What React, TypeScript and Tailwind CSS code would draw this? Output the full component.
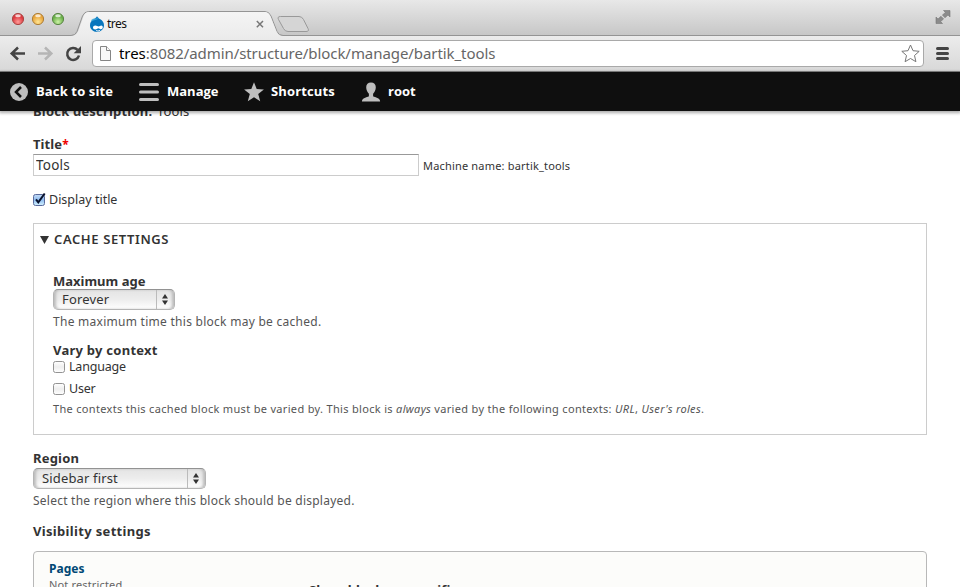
import { useState } from 'react';

interface CheckboxProps {
  label: string;
  defaultChecked?: boolean;
  className?: string;
}

interface SelectProps {
  value: string;
  className?: string;
}

function Checkbox({ label, defaultChecked = false, className = '' }: CheckboxProps) {
  const [checked, setChecked] = useState(defaultChecked);

  return (
    <button
      type="button"
      role="checkbox"
      aria-checked={checked}
      onClick={() => setChecked(!checked)}
      className={`flex h-[18px] items-center gap-1 text-[12.5px] text-[#333] ${className}`}
    >
      <svg width="12" height="14" viewBox="0 0 12 14" className="shrink-0 overflow-visible">
        <defs>
          <linearGradient id="boxOff" x1="0" y1="0" x2="0" y2="1">
            <stop offset="0" stopColor="#fff" />
            <stop offset=".5" stopColor="#eee" />
            <stop offset="1" stopColor="#fff" />
          </linearGradient>
          <linearGradient id="boxOn" x1="0" y1="0" x2="0" y2="1">
            <stop offset="0" stopColor="#c3daf5" />
            <stop offset=".5" stopColor="#8fbdf0" />
            <stop offset="1" stopColor="#d5f3ff" />
          </linearGradient>
        </defs>
        <rect
          x=".5"
          y="1.5"
          width="11"
          height="11"
          rx="2"
          fill={checked ? 'url(#boxOn)' : 'url(#boxOff)'}
          stroke={checked ? '#5a6a9c' : '#939393'}
        />
        {checked && <path d="M3 6.3 5.3 9.3 11.7.5" fill="none" stroke="#08112c" strokeWidth="2" />}
      </svg>
      <span>{label}</span>
    </button>
  );
}

function Select({ value, className = '' }: SelectProps) {
  return (
    <button
      type="button"
      className={`flex h-[21px] items-stretch rounded-[5px] border border-[#b5b5b5] border-t-[#929292] bg-linear-to-b from-[#e4e4e4] via-[#ededed] to-white text-left text-[#333] shadow-[inset_3px_0_3px_-1px_#bbb,inset_-3px_0_3px_-1px_#bbb] ${className}`}
    >
      <span className="flex-1 pl-2 text-[13px] leading-[19px] tracking-[0.15px]">{value}</span>
      <span className="flex w-[18px] items-center justify-center border-l border-[#bbb] pr-[2px]">
        <svg width="6" height="11" viewBox="0 0 6 11" fill="#333">
          <path d="M3 0 6 4.5H0zM3 11 0 6.5h6z" />
        </svg>
      </span>
    </button>
  );
}

function TitleBar() {
  return (
    <div className="flex h-9 bg-linear-to-b from-[#e8e8e8] to-[#c6c6c6]">
      <svg width="960" height="36" viewBox="0 0 960 36">
        <defs>
          <linearGradient id="tab" x1="0" y1="0" x2="0" y2="1">
            <stop offset="0" stopColor="#f4f4f4" />
            <stop offset="1" stopColor="#ececec" />
          </linearGradient>
          <radialGradient id="red" cy=".75">
            <stop offset="0" stopColor="#ff9b98" />
            <stop offset="1" stopColor="#dc3a40" />
          </radialGradient>
          <radialGradient id="amber" cy=".75">
            <stop offset="0" stopColor="#ffe695" />
            <stop offset="1" stopColor="#e9a63c" />
          </radialGradient>
          <radialGradient id="green" cy=".75">
            <stop offset="0" stopColor="#ccf2a6" />
            <stop offset="1" stopColor="#6bb04a" />
          </radialGradient>
        </defs>
        <circle cx="18" cy="19" r="5.6" fill="url(#red)" stroke="#a94744" />
        <circle cx="38" cy="19" r="5.6" fill="url(#amber)" stroke="#ad7e38" />
        <circle cx="58" cy="19" r="5.6" fill="url(#green)" stroke="#5b8646" />
        <g fill="#fff" opacity=".75">
          <ellipse cx="18" cy="15.8" rx="2.8" ry="1.5" />
          <ellipse cx="38" cy="15.8" rx="2.8" ry="1.5" />
          <ellipse cx="58" cy="15.8" rx="2.8" ry="1.5" />
        </g>
        <path
          d="M0 35.5H71Q75.500 35.500 77 31.500L82.500 16Q84.500 11.500 88.500 11.500H265Q269 11.500 271 16L277 31.500Q278.500 35.500 283 35.500H960"
          fill="none"
          stroke="#949494"
        />
        <path
          d="M73 36Q76.500 35 78 31.500L83.500 16.500Q85 12 88.500 12H265Q268.500 12 270.500 16.500L276.500 31.500Q278 35 281 36z"
          fill="url(#tab)"
        />
        <path
          d="M280.500 16.500H299Q302 16.500 303.500 19.500L308 28.500Q309.500 31.500 306 31.500H288Q285 31.500 283.500 28.500L278.500 19.500Q277 16.500 280.500 16.500z"
          fill="#d5d5d5"
          stroke="#999"
        />
        <path
          d="M97 16.200c1 1.600 2 2.300 3.300 3.100 2.200 1.300 3.700 3.200 3.700 6 0 3.900-3.100 6.700-7 6.700s-7-2.900-7-6.700c0-2.700 1.500-4.700 3.600-6 1.400-.9 2.600-1.700 3.400-3.100z"
          fill="#0876bd"
        />
        <path d="M91.200 21.500C91 17 97 19.500 98.500 17.800c.5 2-4 2-7.300 3.700z" fill="#3faadb" opacity=".8" />
        <path
          d="M93 27.600c0-1.500 1.200-2.300 2.400-2.200 1.300 0 2.200 1 3.200 1 .9 0 1.700-1 2.700-1 1 0 1.500.9 1.500 1.900 0 1.300-.8 2-1.800 2-.9 0-1.700-1.100-2.700-1.100s-1.600 1.300-3 1.300-2.300-.7-2.300-1.900z"
          fill="#fff"
        />
        <path d="M96 30.600q2 1 4-.2" fill="none" stroke="#fff" strokeWidth=".9" />
        <text x="107" y="28" fontSize="12" textLength="20" fill="#111">
          tres
        </text>
        <path d="m256.800 21 6.200 6.200m0-6.200-6.200 6.200" stroke="#777" strokeWidth="1.500" />
        <g fill="#8b8b8b" stroke="#777" strokeWidth=".6">
          <path d="M943.500 10.500H950V17l-2-2-3 2.700-2.600-2.600 3-2.700z" />
          <path d="M942.500 23.500H936V17l2 2 3-2.700 2.600 2.600-3 2.700z" />
        </g>
      </svg>
    </div>
  );
}

function AddressBar() {
  return (
    <div className="flex h-9 items-center border-b border-[#888] bg-linear-to-b from-[#ececec] to-[#d8d8d8]">
      <svg width="92" height="35" viewBox="0 0 92 35" fill="none" strokeWidth="2.500">
        <path d="M25 17.500H12m6-6-6.300 6 6.300 6" stroke="#444" />
        <path d="M38 17.500h13m-6-6 6.300 6-6.300 6" stroke="#b5b5b5" />
        <path d="M77.600 13.800A6 6 0 1 0 79 19.500" stroke="#444" />
        <path d="M81 10v7.300h-7.300z" fill="#444" />
      </svg>
      <div className="flex h-[27px] w-[832px] items-center rounded-[4px] border border-[#a9a9a9] bg-white">
        <svg width="26" height="25" viewBox="0 0 26 25" fill="#f8f8f8" stroke="#858585">
          <path d="M7.500 5.500h6l4 4v10h-10z" />
          <path d="M13.500 5.500v4h4" />
        </svg>
        <div className="flex-1 text-[15px] leading-[25px] tracking-[-0.07px] whitespace-nowrap text-[#666]">
          <span className="text-black">tres</span>:8082/admin/structure/block/manage/bartik_tools
        </div>
        <svg width="25" height="25" viewBox="0 0 25 25" fill="none" stroke="#777" strokeLinejoin="round">
          <path d="m12.500 4 2.500 5.700 6.200.6-4.700 4.200 1.400 6.200-5.400-3.200-5.400 3.200 1.400-6.200-4.700-4.200 6.200-.6z" />
        </svg>
      </div>
      <svg width="36" height="35" viewBox="0 0 36 35" stroke="#444" strokeWidth="3" strokeLinecap="round">
        <path d="M13.500 12.500h10m-10 5h10m-10 5h10" />
      </svg>
    </div>
  );
}

function AdminToolbar() {
  return (
    <nav className="relative z-10 flex h-[39px] items-center bg-[#0f0f0f] pl-[9px] font-['Open_Sans','Noto_Sans',sans-serif] text-[13px] font-bold text-white shadow-[0_1px_3px_1px_rgba(0,0,0,0.33)]">
      <a href="#" className="flex w-[129px] items-center">
        <svg width="20" height="20" viewBox="0 0 20 20" className="mr-[7px]">
          <circle cx="10" cy="10" r="9" fill="#bebebe" />
          <path d="m12 5-5 5 5 5" fill="none" stroke="#0f0f0f" strokeWidth="2.500" />
        </svg>
        <span className="tracking-[0.13px]">Back to site</span>
      </a>
      <a href="#" className="flex w-[106px] items-center">
        <svg width="22" height="20" viewBox="0 0 22 20" className="mr-[7px]" stroke="#bebebe" strokeWidth="3" strokeLinecap="round">
          <path d="M2.500 2.500h17m-17 7.500h17m-17 7.500h17" />
        </svg>
        <span>Manage</span>
      </a>
      <a href="#" className="flex w-[117px] items-center">
        <svg width="20" height="20" viewBox="0 0 20 20" className="mr-[7px]" fill="#bebebe">
          <path d="m10 .3 2.700 6.800 7.200.3-5.700 4.600 2 7.300L10 15.200l-6.200 4.100 2-7.300L.1 7.400l7.200-.3z" />
        </svg>
        <span className="tracking-[0.13px]">Shortcuts</span>
      </a>
      <a href="#" className="flex items-center">
        <svg width="20" height="20" viewBox="0 0 20 20" className="mr-[7px]" fill="#bebebe">
          <path d="M10 .5c3 0 4.800 1.800 4.800 4.800 0 2.700-1.300 5.200-2.700 6.500v2.500c2 1.300 7 1.600 7 5.200H.9c0-3.600 5-3.900 7-5.200v-2.500C6.500 10.500 5.200 8 5.200 5.300 5.200 2.300 7 .5 10 .5z" />
        </svg>
        <span>root</span>
      </a>
    </nav>
  );
}

export default function App() {
  const [title, setTitle] = useState('Tools');

  return (
    <div className="flex h-[587px] w-[960px] flex-col overflow-hidden bg-white font-['Noto_Sans','Open_Sans',sans-serif] text-[#333]">
      <TitleBar />
      <AddressBar />
      <AdminToolbar />

      <main className="min-h-0 flex-1 overflow-hidden px-[33px]">
        <form className="-mt-[9px] flex flex-col items-start whitespace-nowrap">
          <div className="h-[18px] text-[13px] leading-[18px] tracking-[0.2px]">
            <b>Block description:</b> <span className="ml-px">Tools</span>
          </div>

          <label className="mt-4 h-[18px] text-[13px] leading-4 font-bold tracking-[0.1px]">
            Title<span className="text-[12px] text-[#e00]">*</span>
          </label>
          <div className="flex h-[22px] items-center">
            <input
              value={title}
              onChange={(e) => setTitle(e.target.value)}
              className="h-[22px] w-[386px] border border-[#ccc] border-t-[#999] bg-white px-[2px] text-[13.5px] tracking-[0.2px] outline-none"
            />
            <span className="ml-1 pt-[2px] text-[11px] tracking-[0.18px]">Machine name: bartik_tools</span>
          </div>

          <Checkbox label="Display title" defaultChecked className="mt-[15px]" />

          <section className="mt-[14px] flex h-[212px] w-[894px] flex-col items-start border border-[#ccc] pl-[19px]">
            <h2 className="-ml-[13px] mt-[7px] flex h-[18px] items-center text-[13px] font-semibold tracking-[0.6px]">
              <svg width="9" height="8" viewBox="0 0 9 8" className="mr-[5px]" fill="#333">
                <path d="M0 0h9L4.500 8z" />
              </svg>
              CACHE SETTINGS
            </h2>
            <label className="mt-6 h-[16px] text-[13px] leading-4 font-bold">Maximum age</label>
            <Select value="Forever" className="w-[122px]" />
            <p className="mt-[3px] h-[18px] text-[12px] leading-[18px] tracking-[0.27px] text-[#555]">
              The maximum time this block may be cached.
            </p>
            <h3 className="mt-[11px] h-[16px] text-[13px] leading-4 font-bold tracking-[0.25px]">Vary by context</h3>
            <Checkbox label="Language" className="tracking-[-0.2px]" />
            <Checkbox label="User" className="mt-1 tracking-[-0.2px]" />
            <p className="mt-[2px] h-[18px] text-[11px] leading-[18px] tracking-[0.32px] text-[#555]">
              The contexts this cached block must be varied by. This block is <em>always</em> varied by the
              following contexts: <em>URL</em>, <em>User's roles</em>.
            </p>
          </section>

          <label className="mt-[15px] h-[18px] text-[13px] leading-4 font-bold tracking-[0.2px]">Region</label>
          <Select value="Sidebar first" className="w-[173px]" />
          <p className="mt-[3px] h-[18px] text-[12px] leading-[18px] tracking-[0.24px] text-[#555]">
            Select the region where this block should be displayed.
          </p>

          <h3 className="mt-[13px] h-[18px] text-[13px] leading-4 font-bold tracking-[0.33px]">
            Visibility settings
          </h3>
          <section className="mt-[10px] flex h-20 w-[894px] rounded-t-[4px] border border-[#b8b8b8] bg-[#fcfcfa]">
            <div className="w-[275px] pl-[15px] pt-2">
              <a href="#" className="block h-[17px] text-[12px] leading-[18px] font-bold text-[#004875]">
                Pages
              </a>
              <p className="text-[11px] leading-[16px] tracking-[0.15px] text-[#666]">Not restricted</p>
            </div>
            <b className="pt-[30px] text-[13px] leading-4 tracking-[0.15px]">Show block on specific pages</b>
          </section>
        </form>
      </main>
    </div>
  );
}
